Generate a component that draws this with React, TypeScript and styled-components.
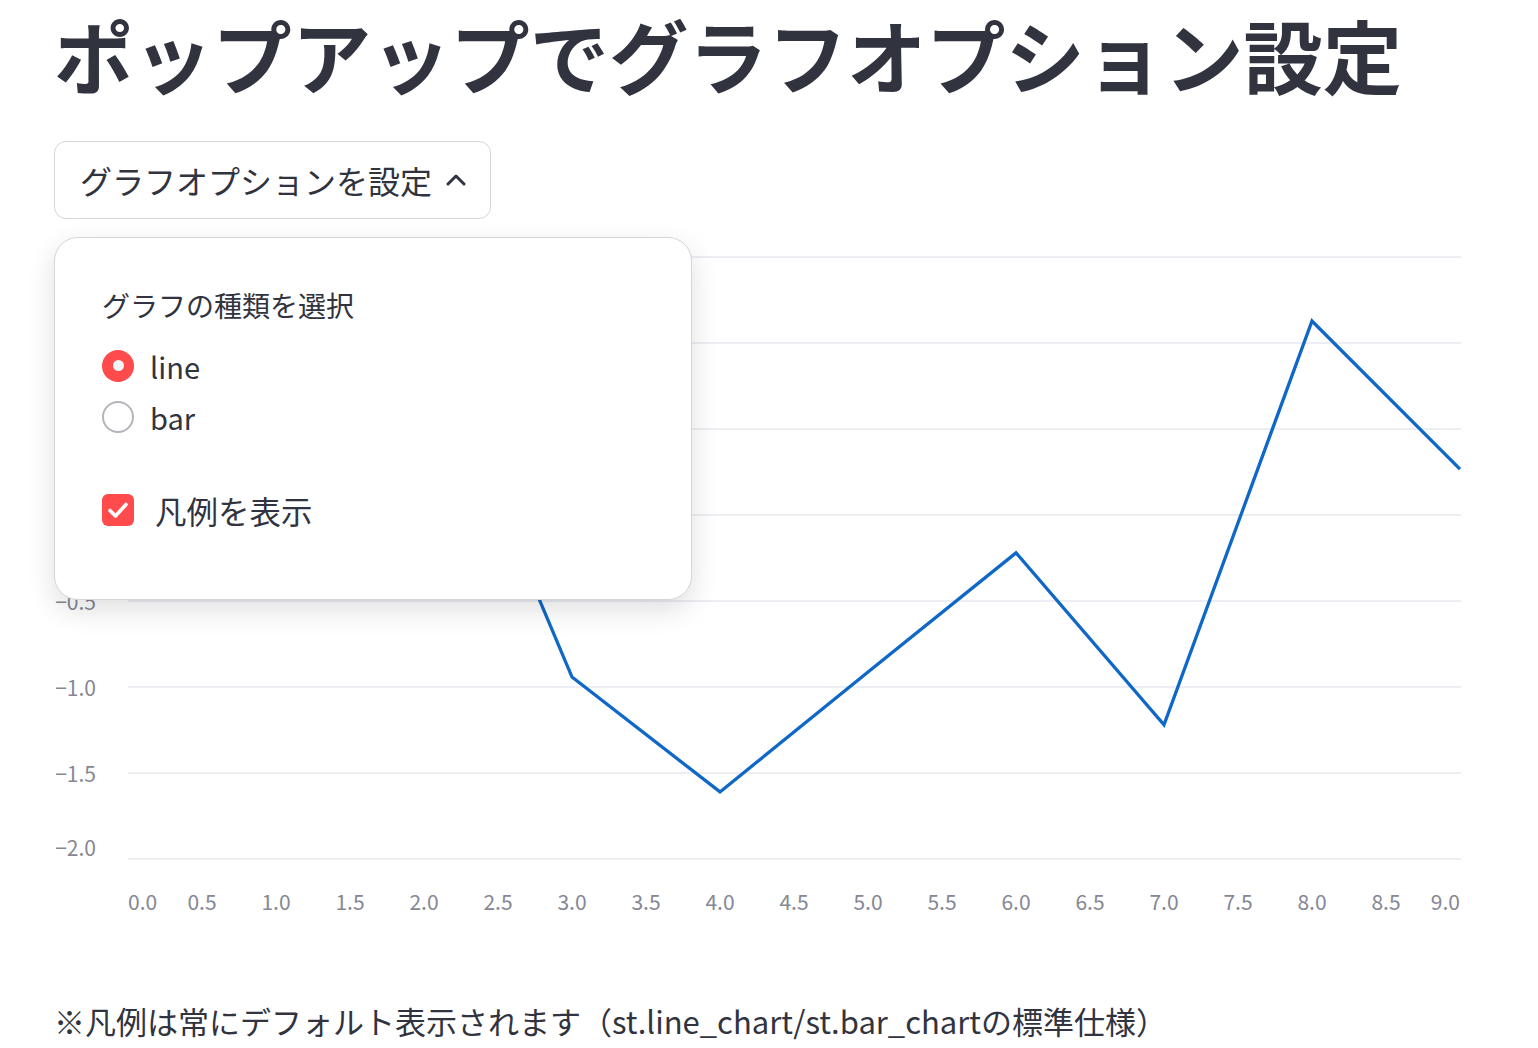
import React from "react";
import styled, { createGlobalStyle } from "styled-components";

const GlobalStyle = createGlobalStyle`
  html, body { margin: 0; padding: 0; background: #ffffff; overflow: hidden; }
  body { font-family: "Noto Sans CJK JP", "Noto Sans", sans-serif; color: #31333f; }
`;

const Page = styled.div`
  width: 1538px;
  height: 1048px;
  padding-left: 54px;
  box-sizing: border-box;
  display: flex;
  flex-direction: column;
`;

const Title = styled.h1`
  margin: 3px 0 0 0;
  padding: 0;
  font-size: 79.3px;
  line-height: 102px;
  font-weight: 700;
  color: #31333f;
  letter-spacing: 0;
  white-space: nowrap;
  overflow: visible;
`;

const Stage = styled.div`
  position: relative;
  margin-top: 36px;
  display: flex;
  flex-direction: column;
`;

const ToggleButton = styled.button`
  align-self: flex-start;
  display: flex;
  align-items: center;
  gap: 14px;
  height: 78px;
  padding: 0 24px 0 25px;
  border: 1px solid #d5d6da;
  border-radius: 12px;
  background: #ffffff;
  font-family: inherit;
  font-size: 32px;
  color: #31333f;
  cursor: pointer;
`;

const ChartSvg = styled.svg`
  display: block;
  margin-top: 18px;
  margin-left: -14px;
`;

const Popover = styled.div`
  position: absolute;
  top: 96px;
  left: 0;
  width: 638px;
  height: 363px;
  box-sizing: border-box;
  background: #ffffff;
  border: 1px solid #d6d6da;
  border-radius: 24px;
  box-shadow: 0 10px 28px rgba(0, 0, 0, 0.13);
  padding: 49px 47px 0 47px;
  display: flex;
  flex-direction: column;
`;

const FieldLabel = styled.div`
  font-size: 28px;
  line-height: 36px;
  color: #31333f;
  margin-bottom: 17px;
`;

const RadioRow = styled.label`
  display: flex;
  align-items: center;
  gap: 16px;
  height: 51px;
  font-size: 29px;
  color: #31333f;
`;

const RadioDot = styled.span<{ $checked?: boolean }>`
  width: 32px;
  height: 32px;
  box-sizing: border-box;
  border-radius: 50%;
  display: flex;
  align-items: center;
  justify-content: center;
  background: ${(p) => (p.$checked ? "#ff4b4b" : "#ffffff")};
  border: ${(p) => (p.$checked ? "none" : "2px solid #b4b5bb")};
  &::after {
    content: "";
    display: ${(p) => (p.$checked ? "block" : "none")};
    width: 11px;
    height: 11px;
    border-radius: 50%;
    background: #f3f4f7;
  }
`;

const CheckRow = styled.label`
  display: flex;
  align-items: center;
  gap: 21px;
  margin-top: 45px;
  font-size: 31.5px;
  color: #31333f;
`;

const CheckBox = styled.span`
  width: 32px;
  height: 32px;
  border-radius: 6px;
  background: #ff4b4b;
  display: flex;
  align-items: center;
  justify-content: center;
`;

const Footer = styled.p`
  margin: 64px 0 0 0;
  font-size: 31px;
  line-height: 40px;
  color: #31333f;
  white-space: nowrap;
`;

// chart geometry, page coordinates offset by the svg origin
const OX = 40;
const OY = 237;
const X0 = 128;
const XS = 148;
const Y0 = 515;
const YS = 172;

const values = [0.55, 1.25, 1.1, -0.942, -1.61, -0.913, -0.22, -1.22, 1.128, 0.267];
const gridYs = [1.5, 1.0, 0.5, 0.0, -0.5, -1.0, -1.5, -2.0];

const px = (x: number) => X0 + x * XS - OX;
const py = (v: number) => Y0 - v * YS - OY;

const fmt = (v: number) => (v < 0 ? "\u2212" : "") + Math.abs(v).toFixed(1);

function Chart() {
  const pts = values.map((v, i) => `${px(i)},${py(v)}`).join(" ");
  const xTicks = Array.from({ length: 19 }, (_, i) => i * 0.5);
  return (
    <ChartSvg width={1440} height={700} viewBox="0 0 1440 700">
      {gridYs.map((g) => (
        <line key={g} x1={px(0)} x2={px(9) + 1} y1={py(g)} y2={py(g)} stroke="#e6e9ef" strokeWidth={1.5} />
      ))}
      {gridYs.map((g, i) => (
        <text
          key={"l" + g}
          x={96 - OX}
          y={py(g) + (i === gridYs.length - 1 ? -12 : i === 0 ? 10 : 0)}
          textAnchor="end"
          dominantBaseline="central"
          fontSize={21}
          fill="#858795"
          fontFamily='"Noto Sans CJK JP", sans-serif'
        >
          {fmt(g)}
        </text>
      ))}
      {xTicks.map((t, i) => (
        <text
          key={"x" + t}
          x={px(t)}
          y={901 - OY}
          textAnchor={i === 0 ? "start" : i === xTicks.length - 1 ? "end" : "middle"}
          dominantBaseline="central"
          fontSize={21}
          fill="#858795"
          fontFamily='"Noto Sans CJK JP", sans-serif'
        >
          {t.toFixed(1)}
        </text>
      ))}
      <polyline points={pts} fill="none" stroke="#0f68c8" strokeWidth={3.3} strokeLinejoin="miter" />
    </ChartSvg>
  );
}

export default function App() {
  return (
    <>
      <GlobalStyle />
      <Page>
        <Title>ポップアップでグラフオプション設定</Title>
        <Stage>
          <ToggleButton>
            グラフオプションを設定
            <svg width="20" height="14" viewBox="0 0 20 14">
              <path d="M2 11 L10 3 L18 11" fill="none" stroke="#31333f" strokeWidth="3" strokeLinecap="round" strokeLinejoin="round" />
            </svg>
          </ToggleButton>
          <Chart />
          <Popover>
            <FieldLabel>グラフの種類を選択</FieldLabel>
            <RadioRow>
              <RadioDot $checked />
              line
            </RadioRow>
            <RadioRow>
              <RadioDot />
              bar
            </RadioRow>
            <CheckRow>
              <CheckBox>
                <svg width="22" height="18" viewBox="0 0 22 18">
                  <path d="M3 9.5 L8.5 15 L19 3.5" fill="none" stroke="#ffffff" strokeWidth="3.6" strokeLinecap="round" strokeLinejoin="round" />
                </svg>
              </CheckBox>
              凡例を表示
            </CheckRow>
          </Popover>
        </Stage>
        <Footer>※凡例は常にデフォルト表示されます（st.line_chart/st.bar_chartの標準仕様）</Footer>
      </Page>
    </>
  );
}
